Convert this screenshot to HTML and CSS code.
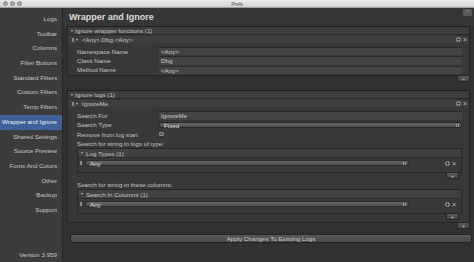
FILE: index.html
```html
<!DOCTYPE html>
<html lang="en">
<head>
    <meta charset="UTF-8">
    <title>Prefs</title>
    <link rel="stylesheet" href="styles.css">
</head>
<body>
    <div class="titlebar">
        <span class="lights"><i></i><i></i><i></i></span>
        <span class="title">Prefs</span>
        <span></span>
    </div>

    <div class="window">
        <nav class="sidebar">
            <ul class="menu">
                <li>Logs</li>
                <li>Toolbar</li>
                <li>Columns</li>
                <li>Filter Buttons</li>
                <li>Standard Filters</li>
                <li>Custom Filters</li>
                <li>Temp Filters</li>
                <li class="active">Wrapper and Ignore</li>
                <li>Shared Settings</li>
                <li>Source Preview</li>
                <li>Fonts And Colors</li>
                <li>Other</li>
                <li>Backup</li>
                <li>Support</li>
            </ul>
            <div class="version">Version 3.959</div>
        </nav>

        <main class="main">
            <header class="page-head">
                <h1>Wrapper and Ignore</h1>
                <span class="help">?</span>
            </header>

            <div class="content">
                <!-- wrapper functions -->
                <section class="group">
                    <div class="fold"><span class="arrow"></span>Ignore wrapper functions (1)</div>
                    <div class="item">
                        <div class="item-head">
                            <span class="handle"></span><span class="arrow"></span>
                            <span class="item-name">&lt;Any&gt;.Dbg.&lt;Any&gt;</span>
                            <span class="item-btns"><span class="eye"></span><span class="close">×</span></span>
                        </div>
                        <div class="field-row"><span class="label">Namespace Name</span><span class="input">&lt;Any&gt;</span></div>
                        <div class="field-row"><span class="label">Class Name</span><span class="input">Dbg</span></div>
                        <div class="field-row"><span class="label">Method Name</span><span class="input">&lt;Any&gt;</span></div>
                    </div>
                </section>
                <div class="add-row"><span class="add">+</span></div>

                <!-- ignore logs -->
                <section class="group group-logs">
                    <div class="fold"><span class="arrow"></span>Ignore logs (1)</div>
                    <div class="item">
                        <div class="item-head">
                            <span class="handle"></span><span class="arrow"></span>
                            <span class="item-name">IgnoreMe</span>
                            <span class="item-btns"><span class="eye"></span><span class="close">×</span></span>
                        </div>
                        <div class="field-row"><span class="label">Search For</span><span class="input">IgnoreMe</span></div>
                        <div class="field-row"><span class="label">Search Type</span><span class="popup">Fixed</span></div>
                        <div class="field-row plain"><span class="label">Remove from log start</span><span class="check"></span></div>
                        <div class="field-row plain"><span class="label">Search for string in logs of type:</span></div>

                        <div class="sublist">
                            <div class="sub-head"><span class="arrow"></span>Log Types (1)</div>
                            <div class="sub-item">
                                <span class="handle"></span>
                                <span class="popup short">Any</span>
                                <span class="item-btns"><span class="eye"></span><span class="close">×</span></span>
                            </div>
                        </div>
                        <div class="add-row sub"><span class="add">+</span></div>

                        <div class="field-row plain"><span class="label">Search for string in these columns:</span></div>

                        <div class="sublist">
                            <div class="sub-head"><span class="arrow"></span>Search In Columns (1)</div>
                            <div class="sub-item">
                                <span class="handle"></span>
                                <span class="popup short">Any</span>
                                <span class="item-btns"><span class="eye"></span><span class="close">×</span></span>
                            </div>
                        </div>
                        <div class="add-row sub"><span class="add">+</span></div>
                    </div>
                </section>
                <div class="add-row"><span class="add">+</span></div>

                <button class="apply">Apply Changes To Existing Logs</button>
            </div>
        </main>
    </div>
</body>
</html>
```

FILE: styles.css
```css
* {
    margin: 0;
    padding: 0;
    box-sizing: border-box;
}

body {
    width: 474px;
    height: 262px;
    overflow: hidden;
    font-family: 'Liberation Sans', Arial, sans-serif;
    font-size: 6.2px;
    color: #c4c4c4;
    background: #303030;
}

/* mac title bar */
.titlebar {
    height: 8px;
    display: grid;
    grid-template-columns: 1fr auto 1fr;
    align-items: center;
    background: linear-gradient(#ececec, #d2d2d2);
    border-bottom: 1px solid #9c9c9c;
}

.lights {
    display: flex;
    gap: 2px;
    padding-left: 3px;
}

.lights i {
    width: 5px;
    height: 5px;
    border-radius: 50%;
    background: #a9a9a9;
    border: 1px solid #909090;
}

.title {
    font-size: 5px;
    color: #4a4a4a;
}

.window {
    display: flex;
    height: 254px;
}

/* left menu */
.sidebar {
    width: 63px;
    flex-shrink: 0;
    display: flex;
    flex-direction: column;
    background: #3c3c3c;
    border-right: 1px solid #262626;
    padding-top: 4px;
}

.menu {
    list-style: none;
}

.menu li {
    height: 14.7px;
    line-height: 14.7px;
    text-align: right;
    padding-right: 5px;
    white-space: nowrap;
    color: #c8c8c8;
}

.menu li.active {
    background: #3f609b;
    color: #f0f0f0;
}

.version {
    margin-top: auto;
    text-align: right;
    padding: 0 5px 4px 0;
    color: #c8c8c8;
}

/* main column */
.main {
    flex: 1;
    display: flex;
    flex-direction: column;
    background: #313131;
}

.page-head {
    height: 18px;
    display: flex;
    justify-content: space-between;
    align-items: center;
    padding: 0 2px 0 6px;
    background: #363636;
}

.page-head h1 {
    font-size: 9px;
    font-weight: bold;
    color: #dcdcdc;
}

.help {
    align-self: flex-start;
    margin-top: 1px;
    width: 9px;
    height: 7px;
    line-height: 7px;
    text-align: center;
    font-size: 5px;
    color: #9a9a9a;
    background: #585858;
    border-radius: 1px;
}

.content {
    padding: 0 4px;
    display: flex;
    flex-direction: column;
}

.group {
    background: #383838;
    border: 1px solid #242424;
    border-top-color: #1e1e1e;
}

.fold {
    height: 8px;
    display: flex;
    align-items: center;
    gap: 2px;
    padding-left: 3px;
    background: #3d3d3d;
    border-bottom: 1px solid #2a2a2a;
    color: #c8c8c8;
}

.arrow {
    width: 0;
    height: 0;
    border-left: 1.6px solid transparent;
    border-right: 1.6px solid transparent;
    border-top: 2.4px solid #c0c0c0;
}

.item {
    padding: 1px 7px 1px 0;
}

.item-head {
    height: 7px;
    display: flex;
    align-items: center;
    gap: 1.5px;
    padding-left: 4px;
    margin-bottom: 3.5px;
    margin-right: -7px;
    background: #3e3e3e;
}

.item-name {
    padding-left: 3px;
}

.handle {
    width: 2px;
    height: 4px;
    border-left: 1px solid #8a8a8a;
    border-right: 1px solid #8a8a8a;
    flex-shrink: 0;
}

.item-btns {
    margin-left: auto;
    display: flex;
    align-items: center;
    gap: 1.5px;
    padding-right: 2px;
}

.eye {
    width: 5px;
    height: 5px;
    border-radius: 50%;
    border: 1px solid #999;
    background: radial-gradient(circle, #333 0 1px, #b4b4b4 1.2px);
}

.close {
    font-size: 7px;
    line-height: 5px;
    color: #bdbdbd;
}

.field-row {
    height: 9.3px;
    display: grid;
    grid-template-columns: 82px 1fr;
    align-items: center;
    padding-left: 9px;
}

.field-row.plain {
    grid-template-columns: auto 1fr;
}

.field-row.plain .label {
    width: 82px;
    white-space: nowrap;
}

.field-row.plain .label:only-child {
    width: auto;
}

.input {
    height: 8.3px;
    line-height: 8px;
    padding-left: 2px;
    background: #444;
    border-top: 1px solid #2a2a2a;
    color: #d0d0d0;
}

.popup {
    height: 6px;
    line-height: 6px;
    padding-left: 4px;
    border-radius: 3px;
    background: linear-gradient(#6a6a6a, #4c4c4c);
    border: 0.5px solid #2a2a2a;
    color: #e2e2e2;
    position: relative;
}

.popup::after {
    content: '';
    position: absolute;
    right: 2px;
    top: 1px;
    width: 1px;
    height: 3px;
    border-left: 1px solid #9a9a9a;
    border-right: 1px solid #9a9a9a;
}

.check {
    width: 5px;
    height: 4px;
    border: 1px solid #8a8a8a;
    border-radius: 1px;
    background: #555;
}

.sublist {
    margin-left: 9px;
    background: #393939;
    border: 1px solid #262626;
}

.sub-head {
    height: 9px;
    display: flex;
    align-items: center;
    gap: 3px;
    padding-left: 3px;
    background: #414141;
    border-bottom: 1px solid #2c2c2c;
}

.sub-item {
    height: 9px;
    display: flex;
    align-items: center;
    padding: 0 5px 0 2px;
    margin: 0.5px 0 4.5px;
}

.sub-item .handle {
    margin-right: 3px;
}

.popup.short {
    width: 324px;
}

.sub-item .item-btns {
    padding-right: 0;
}

.add-row {
    display: flex;
    justify-content: flex-end;
    height: 14px;
    padding-right: 0;
}

.add-row.sub {
    height: 7px;
    padding-right: 3px;
}

.add {
    width: 13px;
    height: 6px;
    line-height: 6px;
    text-align: center;
    font-size: 6px;
    color: #bbb;
    background: linear-gradient(#5a5a5a, #474747);
    border: 0.5px solid #262626;
    border-top: none;
}

.group-logs + .add-row {
    height: 11px;
}

.apply {
    height: 9px;
    margin: 0 -2px 0 3px;
    font-family: inherit;
    font-size: 6.2px;
    color: #cfcfcf;
    border: 1px solid #232323;
    border-radius: 2px;
    background: linear-gradient(#5b5b5b, #474747);
}
```
